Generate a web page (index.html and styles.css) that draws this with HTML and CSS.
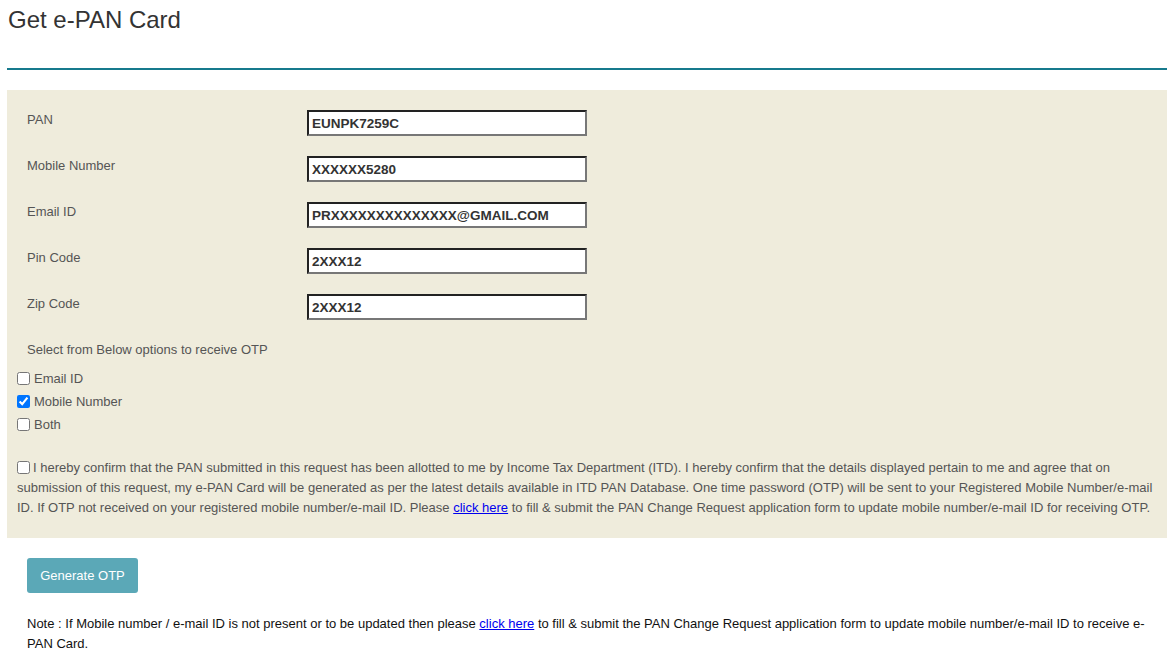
FILE: index.html
```html
<!DOCTYPE html>
<html>
<head>
<meta charset="utf-8">
<link rel="stylesheet" href="styles.css">
</head>
<body>
<div class="page">
  <h1 class="title">Get e-PAN Card</h1>
  <div class="rule"></div>
  <div class="panel">
    <div class="row"><label class="lbl">PAN</label><input class="field" type="text" value="EUNPK7259C"></div>
    <div class="row"><label class="lbl">Mobile Number</label><input class="field" type="text" value="XXXXXX5280"></div>
    <div class="row"><label class="lbl">Email ID</label><input class="field" type="text" value="PRXXXXXXXXXXXXXX@GMAIL.COM"></div>
    <div class="row"><label class="lbl">Pin Code</label><input class="field" type="text" value="2XXX12"></div>
    <div class="row"><label class="lbl">Zip Code</label><input class="field" type="text" value="2XXX12"></div>
    <div class="select-title">Select from Below options to receive OTP</div>
    <div class="opts">
      <label class="opt"><input type="checkbox" class="cb">Email ID</label>
      <label class="opt"><input type="checkbox" class="cb" checked>Mobile Number</label>
      <label class="opt"><input type="checkbox" class="cb">Both</label>
    </div>
    <p class="confirm"><input type="checkbox" class="cb cb-inline">I hereby confirm that the PAN submitted in this request has been allotted to me by Income Tax Department (ITD). I hereby confirm that the details displayed pertain to me and agree that on submission of this request, my e-PAN Card will be generated as per the latest details available in ITD PAN Database. One time password (OTP) will be sent to your Registered Mobile Number/e-mail ID. If OTP not received on your registered mobile number/e-mail ID. Please <a href="#">click here</a> to fill &amp; submit the PAN Change Request application form to update mobile number/e-mail ID for receiving OTP.</p>
  </div>
  <div class="actions"><button class="btn" type="button">Generate OTP</button></div>
  <p class="note">Note : If Mobile number / e-mail ID is not present or to be updated then please <a href="#">click here</a> to fill &amp; submit the PAN Change Request application form to update mobile number/e-mail ID to receive e-PAN Card.</p>
</div>
</body>
</html>
```
FILE: styles.css
```css
html, body { margin: 0; padding: 0; background: #fff; }
body { font-family: "Liberation Sans", Arial, sans-serif; color: #333; }
.page { padding: 0 9px 0 7px; }
.title { margin: 0; padding: 6px 0 0 1px; font-size: 24px; font-weight: normal; line-height: 28px; color: #333; }
.rule { height: 2px; background: #177a8d; margin-top: 34px; }
.panel { margin-top: 20px; background: #efecdc; padding: 20px 10px 20px 10px; }
.row { display: flex; align-items: flex-start; height: 46px; }
.lbl { width: 290px; padding-left: 10px; box-sizing: border-box; font-size: 13px; color: #555; line-height: 20px; }
.field { box-sizing: border-box; width: 280px; height: 26px; margin: 0; padding: 0 3px; border: 2px solid; border-color: #222 #777 #777 #222; background: #fff; font-family: "Liberation Sans", Arial, sans-serif; font-size: 13.5px; font-weight: bold; color: #333; outline: none; }
.select-title { padding-left: 10px; font-size: 13px; color: #555; line-height: 20px; }
.opts { margin-top: 7px; display: flex; flex-direction: column; }
.opt { display: flex; align-items: center; height: 23px; font-size: 13px; color: #555; }
.cb { width: 13px; height: 13px; margin: 0 4px 0 0; }
.confirm { margin: 22px 0 0 0; font-size: 13px; line-height: 20px; color: #555; }
.cb-inline { vertical-align: -2px; margin-right: 3px; }
.confirm a, .note a { color: #00e; text-decoration: underline; }
.actions { padding: 20px 0 0 20px; }
.btn { width: 111px; height: 35px; border: none; border-radius: 3px; background: #5ba8b7; color: #fff; font-family: "Liberation Sans", Arial, sans-serif; font-size: 13px; padding: 0; }
.note { margin: 21px 0 0 0; padding-left: 20px; font-size: 13px; line-height: 20px; color: #111; padding-right: 10px; }
```
